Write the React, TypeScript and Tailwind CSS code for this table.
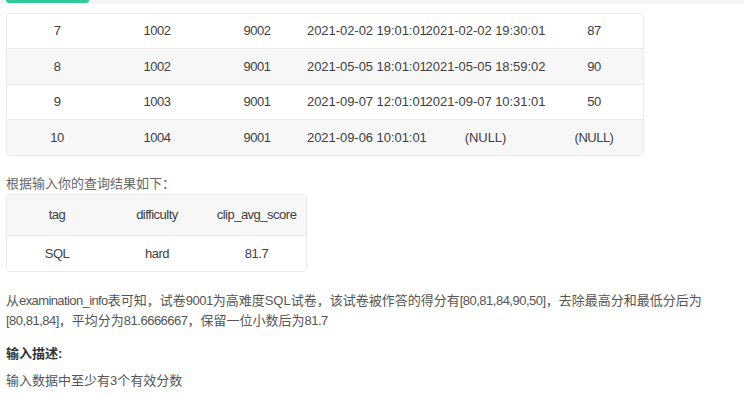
import React from 'react';

// rows of the examination record table shown at the top
const records = [
  ['7', '1002', '9002', '2021-02-02 19:01:01', '2021-02-02 19:30:01', '87'],
  ['8', '1002', '9001', '2021-05-05 18:01:01', '2021-05-05 18:59:02', '90'],
  ['9', '1003', '9001', '2021-09-07 12:01:01', '2021-09-07 10:31:01', '50'],
  ['10', '1004', '9001', '2021-09-06 10:01:01', '(NULL)', '(NULL)'],
];

const colWidths = ['w-[100px]', 'w-[100px]', 'w-[100px]', 'w-[100px]', 'w-[157px]', 'w-[60px]'];
// heights include the 1px divider on top of rows 2..4
const rowHeights = ['h-[34px]', 'h-[36px]', 'h-[35px]', 'h-[36px]'];

export default function App() {
  return (
    <div className="w-[744px] h-[410px] overflow-hidden bg-white font-['Liberation_Sans','Noto_Sans_CJK_SC',sans-serif] text-[13px]">
      {/* top bar with the tab underline */}
      <div className="h-[4px] bg-[#f4f5f7] pl-[6px]">
        <div className="w-[83px] h-[3px] bg-[#32ca99] rounded-b-[4px]" />
      </div>

      <div className="pl-[6px] pt-[9px]">
        {/* records table */}
        <div className="w-[638px] border border-[#ebebeb] rounded-[4px] overflow-hidden text-[#404040]">
          {records.map((row, i) => (
            <div
              key={i}
              className={`flex items-center ${rowHeights[i]} ${i > 0 ? 'border-t border-[#ebebeb]' : ''} ${
                i % 2 === 1 ? 'bg-[#f7f7f7]' : 'bg-white'
              }`}
            >
              {row.map((cell, j) => (
                <div
                  key={j}
                  className={`${colWidths[j]} shrink-0 text-center whitespace-nowrap ${
                    j === 3 || j === 4 ? 'tracking-[-0.05px]' : 'tracking-[-0.5px]'
                  }`}
                >
                  {cell}
                </div>
              ))}
            </div>
          ))}
        </div>

        <p className="mt-[18px] leading-[20px] text-[#666]">根据输入你的查询结果如下：</p>

        {/* result table */}
        <div className="w-[301px] border border-[#ebebeb] rounded-[4px] overflow-hidden text-[#404040] tracking-[-0.5px]">
          <div className="flex items-center h-[40px] bg-[#f7f7f7]">
            <div className="w-[100px] text-center">tag</div>
            <div className="w-[100px] text-center">difficulty</div>
            <div className="w-[99px] text-center">clip_avg_score</div>
          </div>
          <div className="flex items-center h-[36px] border-t border-[#ebebeb] bg-white">
            <div className="w-[100px] text-center">SQL</div>
            <div className="w-[100px] text-center">hard</div>
            <div className="w-[99px] text-center">81.7</div>
          </div>
        </div>

        <p className="mt-[19px] w-[730px] leading-[20px] text-[#555]">
          从<span className="tracking-[-0.6px]">examination_info</span>表可知，试卷
          <span className="tracking-[-0.5px]">9001</span>为高难度SQL试卷，该试卷被作答的得分有
          <span className="tracking-[-0.5px]">[80,81,84,90,50]</span>，去除最高分和最低分后为
          <span className="tracking-[-0.5px]">[80,81,84]</span>，平均分为
          <span className="tracking-[-0.5px]">81.6666667</span>，保留一位小数后为
          <span className="tracking-[-0.5px]">81.7</span>
        </p>

        <p className="mt-[13px] leading-[20px] font-bold text-[#333]">输入描述:</p>
        <p className="mt-[7px] leading-[20px] text-[#555]">输入数据中至少有3个有效分数</p>
      </div>
    </div>
  );
}
